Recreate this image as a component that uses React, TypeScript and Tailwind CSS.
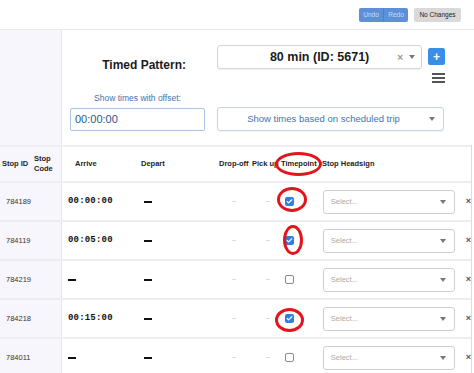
import { Check } from 'lucide-react'

type Row = { id: string; arrive?: string; timepoint: boolean }

const rows: Row[] = [
  { id: '784189', arrive: '00:00:00', timepoint: true },
  { id: '784119', arrive: '00:05:00', timepoint: true },
  { id: '784219', timepoint: false },
  { id: '784218', arrive: '00:15:00', timepoint: true },
  { id: '784011', timepoint: false },
]

function Caret() {
  return <span className="h-0 w-0 border-x-[3.5px] border-t-[4px] border-x-transparent border-t-[#777]" />
}

function Dash() {
  return <span className="block h-[2px] w-[8px] bg-[#111]" />
}

function Checkbox({ checked }: { checked: boolean }) {
  if (checked) {
    return (
      <span className="flex size-[9px] items-center justify-center rounded-[2px] bg-[#2f7ee3]">
        <Check className="size-[7px] text-white" strokeWidth={4} />
      </span>
    )
  }
  return <span className="block size-[9px] rounded-[2px] border border-[#8a8a8a] bg-white" />
}

function Ellipse({ className }: { className: string }) {
  return <div className={`pointer-events-none absolute rounded-[50%] border-[3px] border-[#e4141b] ${className}`} />
}

export default function App() {
  return (
    <div className="relative h-[373px] w-[474px] overflow-hidden bg-white font-['Liberation_Sans',Arial,sans-serif] text-[#222]">
      <header className="flex h-[30px] items-start justify-end gap-[6px] border-b border-[#e9e9ec] pr-[13px] pt-[8px]">
        <div className="flex h-[14px] w-[49px] overflow-hidden rounded-[2px] bg-[#5e90d9] text-[6.5px] text-[#c9dcf3]">
          <span className="flex flex-1 items-center justify-center border-r border-[#4f7fc6]">Undo</span>
          <span className="flex flex-1 items-center justify-center">Redo</span>
        </div>
        <div className="flex h-[14px] w-[47px] items-center justify-center rounded-[2px] bg-[#d9d9d9] text-[6.5px] text-[#1a1a1a]">
          No Changes
        </div>
      </header>

      <div className="flex h-[115px]">
        <div className="w-[62px] border-r border-[#e6e6ee] bg-[#f7f6fd]" />
        <div className="flex flex-1 flex-col pl-[8px] pt-[15px]">
          <div className="flex h-[46px] items-start">
            <div className="w-[135px] pr-[19px] pt-[11px] text-right text-[12px] font-bold text-[#1b1b1b]">
              Timed Pattern:
            </div>
            <div className="ml-[12px] flex h-[24px] w-[205px] items-center rounded-[3px] border border-[#d4d4d4] shadow-[0_1px_1px_rgba(0,0,0,0.06)]">
              <span className="flex-1 pl-[24px] text-center text-[12.5px] font-bold text-[#1b1b1b]">80 min (ID: 5671)</span>
              <span className="mr-[6px] text-[10px] font-bold text-[#999]">×</span>
              <span className="mr-[6px] flex"><Caret /></span>
            </div>
            <div className="ml-[6px] flex flex-col items-center">
              <div className="mt-[3px] flex size-[17px] items-center justify-center rounded-[2px] bg-[#3a8ee6] text-[12px] font-bold leading-none text-white">
                +
              </div>
              <div className="ml-[4px] mt-[8px] flex w-[13px] flex-col gap-[2px]">
                <span className="h-[2px] bg-[#555]" />
                <span className="h-[2px] bg-[#555]" />
                <span className="h-[2px] bg-[#555]" />
              </div>
            </div>
          </div>
          <div className="flex items-start">
            <div className="flex w-[135px] flex-col">
              <div className="h-[14px] whitespace-nowrap text-center text-[8.5px] leading-[14px] text-[#3f74ad]">Show times with offset:</div>
              <div className="mt-[3px] flex h-[23px] items-center rounded-[2px] border border-[#a9c4e4] pl-[4px] text-[11px] text-[#2c5786]">
                00:00:00
              </div>
            </div>
            <div className="ml-[12px] mt-[16px] flex h-[24px] w-[227px] items-center rounded-[3px] border border-[#c8d4e2] shadow-[0_1px_1px_rgba(0,0,0,0.05)]">
              <span className="flex-1 whitespace-nowrap text-center text-[9.5px] text-[#3f74ad]">Show times based on scheduled trip</span>
              <span className="mr-[8px] flex"><Caret /></span>
            </div>
          </div>
        </div>
      </div>

      <div className="w-[472px] border-r border-[#dcdce2]">
        <div className="flex h-[36px] whitespace-nowrap border-t-2 border-[#ececf2] text-[7.5px] font-bold text-[#1d1d1d]">
          <div className="flex w-[62px] items-center border-r border-[#e6e6ee] bg-[#f7f6fd]">
            <span className="w-[34px] pl-[2px]">Stop ID</span>
            <span className="leading-[10px]">Stop<br />Code</span>
          </div>
          <div className="flex w-[73px] items-center pl-[13px]">Arrive</div>
          <div className="flex w-[77px] items-center pl-[6px]">Depart</div>
          <div className="flex w-[38px] items-center pl-[7px]">Drop-off</div>
          <div className="flex w-[28px] items-center pl-[2px]">Pick up</div>
          <div className="flex w-[42px] items-center pl-[3px]">Timepoint</div>
          <div className="flex w-[140px] items-center pl-[2px]">Stop Headsign</div>
        </div>

        {rows.map((r) => (
          <div key={r.id} className="flex h-[39px] border-t-2 border-[#ececf2]">
            <div className="flex w-[62px] items-center border-r border-[#e6e6ee] bg-[#f7f6fd] pl-[6px] text-[7.5px] text-[#333]">
              {r.id}
            </div>
            <div className="flex w-[73px] items-center pl-[6px] font-['Liberation_Mono',monospace] text-[9px] font-bold tracking-[0.2px] text-[#111]">
              {r.arrive ?? <Dash />}
            </div>
            <div className="flex w-[77px] items-center pl-[9px]">
              <Dash />
            </div>
            <div className="flex w-[38px] items-center pl-[20px] text-[7px] text-[#bbb]">–</div>
            <div className="flex w-[28px] items-center pl-[16px] text-[7px] text-[#bbb]">–</div>
            <div className="flex w-[42px] items-center pl-[7px]">
              <Checkbox checked={r.timepoint} />
            </div>
            <div className="flex w-[140px] items-center pl-[3px]">
              <div className="flex h-[24px] w-[132px] items-center rounded-[3px] border border-[#cfcfcf] pl-[7px] pr-[8px]">
                <span className="flex-1 text-[7.5px] text-[#aaa]">Select...</span>
                <Caret />
              </div>
            </div>
            <div className="flex flex-1 items-center pl-[6px] text-[9px] font-bold text-[#555]">×</div>
          </div>
        ))}
      </div>

      <Ellipse className="left-[275px] top-[152px] h-[24px] w-[47px]" />
      <Ellipse className="left-[277px] top-[187px] h-[25px] w-[30px]" />
      <Ellipse className="left-[283px] top-[225px] h-[30px] w-[20px]" />
      <Ellipse className="left-[275px] top-[308px] h-[24px] w-[29px]" />
    </div>
  )
}
